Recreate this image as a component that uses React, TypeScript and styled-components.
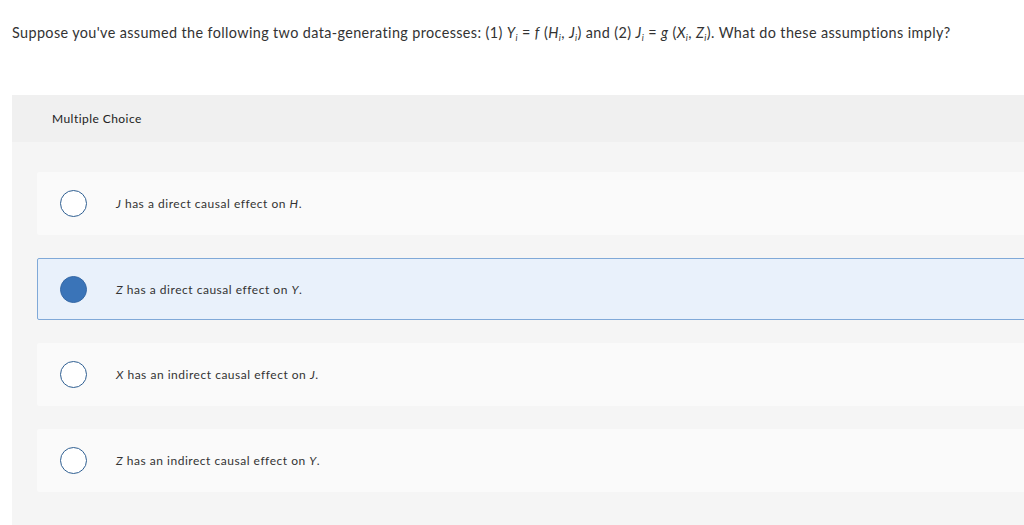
import React from "react";
import styled, { createGlobalStyle } from "styled-components";

const Global = createGlobalStyle`
  html, body { margin: 0; padding: 0; background: #ffffff; overflow: hidden; }
  body { font-family: Lato, "Open Sans", "Liberation Sans", sans-serif; color: #333333; }
`;

const Page = styled.div`
  padding-left: 12px;
  height: 525px;
  display: flex;
  flex-direction: column;
`;

const Question = styled.p`
  margin: 0;
  margin-top: 23px;
  height: 20px;
  font-size: 14.4px;
  line-height: 20px;
  letter-spacing: 0.38px;
  color: #333;
  white-space: nowrap;
`;

const Var = styled.i`
  font-style: italic;
`;

const Sub = styled.sub`
  font-size: 9px;
  font-style: italic;
  vertical-align: -3px;
  line-height: 0;
`;

const Panel = styled.section`
  margin-top: 52px;
  margin-right: -40px;
  flex: 1;
  background: #f5f5f5;
  display: flex;
  flex-direction: column;
`;

const PanelHeader = styled.div`
  height: 47px;
  background: #f0f0f0;
  display: flex;
  align-items: center;
  padding-left: 40px;
  font-size: 12px;
  letter-spacing: 0.45px;
  color: #222;
`;

const Options = styled.div`
  padding: 30px 0 0 25px;
  display: flex;
  flex-direction: column;
  gap: 23px;
`;

const Option = styled.label<{ $selected?: boolean }>`
  box-sizing: border-box;
  height: ${(p) => (p.$selected ? "62px" : "63px")};
  display: flex;
  align-items: center;
  padding-left: 23px;
  background: ${(p) => (p.$selected ? "#e9f1fb" : "#fafafa")};
  border: 1px solid ${(p) => (p.$selected ? "#80a9d8" : "transparent")};
  border-radius: 2px;
  font-size: 12px;
  letter-spacing: 0.52px;
  color: #333;
  cursor: pointer;
`;

const Radio = styled.span<{ $checked?: boolean }>`
  box-sizing: border-box;
  width: 27px;
  height: 27px;
  border-radius: 50%;
  flex-shrink: 0;
  border: 1px solid ${(p) => (p.$checked ? "#3568a5" : "#2f5f92")};
  background: ${(p) => (p.$checked ? "#3a74b8" : "#ffffff")};
  margin-left: -1px;
`;

const OptionText = styled.span`
  margin-left: 29px;
`;

const options: { v1: string; rest: string; v2: string; selected?: boolean }[] = [
  { v1: "J", rest: " has a direct causal effect on ", v2: "H" },
  { v1: "Z", rest: " has a direct causal effect on ", v2: "Y", selected: true },
  { v1: "X", rest: " has an indirect causal effect on ", v2: "J" },
  { v1: "Z", rest: " has an indirect causal effect on ", v2: "Y" },
];

export default function App() {
  return (
    <>
      <Global />
      <Page>
        <Question>
          Suppose you've assumed the following two data-generating processes: (1){" "}
          <Var>Y</Var>
          <Sub>i</Sub> = <Var>f</Var> (<Var>H</Var>
          <Sub>i</Sub>, <Var>J</Var>
          <Sub>i</Sub>) and (2) <Var>J</Var>
          <Sub>i</Sub> = <Var>g</Var> (<Var>X</Var>
          <Sub>i</Sub>, <Var>Z</Var>
          <Sub>i</Sub>). What do these assumptions imply?
        </Question>
        <Panel>
          <PanelHeader>Multiple Choice</PanelHeader>
          <Options>
            {options.map((o, i) => (
              <Option key={i} $selected={o.selected}>
                <Radio $checked={o.selected} />
                <OptionText>
                  <Var>{o.v1}</Var>
                  {o.rest}
                  <Var>{o.v2}</Var>.
                </OptionText>
              </Option>
            ))}
          </Options>
        </Panel>
      </Page>
    </>
  );
}
